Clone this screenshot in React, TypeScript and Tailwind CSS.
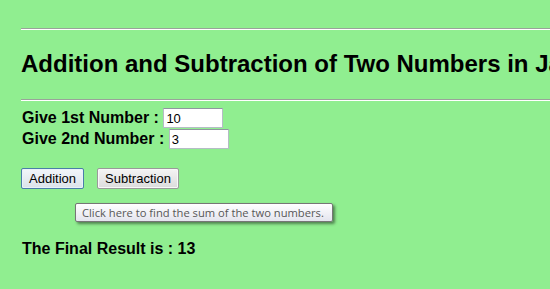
import React, { useState } from 'react';

const Rule = () => (
  <div className="h-0 border-t border-b border-t-[#9aa39a] border-b-white" />
);

export default function App() {
  const [first, setFirst] = useState('10');
  const [second, setSecond] = useState('3');
  const [result, setResult] = useState<number>(13);

  const add = () => setResult(Number(first) + Number(second));
  const subtract = () => setResult(Number(first) - Number(second));

  return (
    <div className="w-[550px] h-[289px] overflow-hidden bg-[#90ee90] text-black font-['Liberation_Sans',Arial,sans-serif]">
      <div className="w-[900px] pl-[21px] pt-[28px]">
        <Rule />
        <h2 className="mt-[20px] mb-[21px] text-[24px] leading-[28px] font-bold whitespace-nowrap">
          Addition and Subtraction of Two Numbers in JavaScript
        </h2>
        <Rule />

        <div className="mt-[7px] pl-px">
          <div className="flex items-start h-[21px]">
            <span className="text-[16px] leading-[19px] font-bold whitespace-pre">Give 1st Number : </span>
            <input
              value={first}
              onChange={e => setFirst(e.target.value)}
              className="w-[60px] h-[20px] px-[2px] bg-white border border-[#b5bcc5] border-t-[#8f979f] text-[13px] leading-[18px] text-black outline-none font-['Liberation_Sans',Arial,sans-serif]"
            />
          </div>
          <div className="flex items-start h-[21px]">
            <span className="text-[16px] leading-[19px] font-bold whitespace-pre">Give 2nd Number : </span>
            <input
              value={second}
              onChange={e => setSecond(e.target.value)}
              className="w-[60px] h-[20px] px-[2px] bg-white border border-[#b5bcc5] border-t-[#8f979f] text-[13px] leading-[18px] text-black outline-none font-['Liberation_Sans',Arial,sans-serif]"
            />
          </div>
        </div>

        <div className="relative mt-[18px] flex gap-[13px]">
          <button
            onClick={add}
            className="w-[63px] h-[21px] rounded-[2px] border border-[#4a7fa8] bg-gradient-to-b from-[#f2f6fa] to-[#dbe3ea] shadow-[inset_0_0_0_1px_#e9f1f8] text-[13px] leading-[19px] text-black"
          >
            Addition
          </button>
          <button
            onClick={subtract}
            className="w-[82px] h-[21px] rounded-[2px] border border-[#9a9a9a] bg-gradient-to-b from-[#f4f4f4] to-[#dcdcdc] shadow-[inset_0_0_0_1px_#f8f8f8] text-[13px] leading-[19px] text-black"
          >
            Subtraction
          </button>

          <div className="absolute left-[54px] top-[35px] w-[258px] h-[19px] rounded-[2px] border border-[#767676] bg-gradient-to-b from-white to-[#e4e5ee] shadow-[2px_2px_3px_rgba(0,0,0,0.45)] pl-[6px] text-[11.2px] leading-[17px] text-[#575757] whitespace-nowrap font-['Open_Sans','Noto_Sans',sans-serif]">
            Click here to find the sum of the two numbers.
          </div>
        </div>

        <p className="mt-[50px] pl-px text-[16px] leading-[19px] font-bold">
          The Final Result is : {result}
        </p>
      </div>
    </div>
  );
}
